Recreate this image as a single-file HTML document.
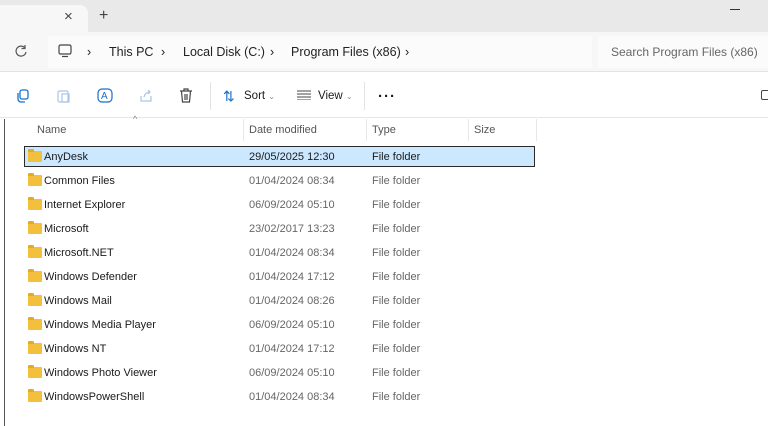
<!DOCTYPE html>
<html><head><style>
*{margin:0;padding:0;box-sizing:border-box}
body{width:768px;height:426px;overflow:hidden;background:#fff;font-family:"Liberation Sans",sans-serif;font-size:11px;color:#1a1a1a;position:relative}
.abs{position:absolute}
.tabbar{left:0;top:0;width:768px;height:32px;background:#e9e9e9}
.tab{left:0;top:5px;width:88px;height:27px;background:#f7f7f7;border-radius:0 8px 0 0}
.addr{left:0;top:32px;width:768px;height:40px;background:#f7f7f7;border-bottom:1px solid #e3e3e3}
.crumb{left:48px;top:36px;width:544px;height:32px;background:#fbfbfb}
.search{left:598px;top:36px;width:170px;height:32px;background:#fbfbfb;color:#666;font-size:12px;padding:9px 0 0 13px}
.bc{top:45px;font-size:12.5px;color:#222}
.tb{top:73px;left:0;width:768px;height:45px;background:#fff;border-bottom:1px solid #e6e6e6}
.hdr{top:119px;color:#555;font-size:11px}
.row{position:absolute;left:0;width:768px;height:24px}
.row span{position:absolute;top:5px}
.f{position:absolute;left:28px;top:5px;width:14px;height:11px;background:#f3c03e;border-radius:1px}
.f:before{content:"";position:absolute;left:0;top:-2px;width:6px;height:3px;background:#e5ab24;border-radius:1px 1px 0 0}
.g{color:#666}
</style></head><body>
<div class="abs tabbar"></div>
<div class="abs tab"></div>
<div class="abs" style="left:64px;top:8px;font-size:15px;color:#444">×</div>
<div class="abs" style="left:99px;top:7px;font-size:16px;color:#444">+</div>
<div class="abs" style="left:730px;top:9px;width:10px;height:1px;background:#333"></div>
<div class="abs addr"></div>
<div class="abs crumb"></div>
<div class="abs search">Search Program Files (x86)</div>
<svg class="abs" style="left:14px;top:44px" width="14" height="14" viewBox="0 0 14 14"><path d="M11 4A5 5 0 1 0 12 8" fill="none" stroke="#555" stroke-width="1.2"/><path d="M11 1v3.5H7.5" fill="none" stroke="#555" stroke-width="1.2"/></svg>
<svg class="abs" style="left:58px;top:44px" width="14" height="14" viewBox="0 0 14 14"><rect x="1" y="1" width="12" height="9" rx="1.5" fill="none" stroke="#444" stroke-width="1.2"/><path d="M4 12.5h6" stroke="#444" stroke-width="1.2"/></svg>
<div class="abs bc" style="left:87px">›</div>
<div class="abs bc" style="left:109px">This PC</div>
<div class="abs bc" style="left:161px">›</div>
<div class="abs bc" style="left:183px">Local Disk (C:)</div>
<div class="abs bc" style="left:270px">›</div>
<div class="abs bc" style="left:291px">Program Files (x86)</div>
<div class="abs bc" style="left:405px">›</div>
<div class="abs tb"></div>
<svg class="abs" style="left:15px;top:88px" width="16" height="16" viewBox="0 0 16 16"><rect x="5" y="2" width="8" height="9" rx="2" fill="none" stroke="#1a6fc9" stroke-width="1.3"/><path d="M3 5v6a3 3 0 0 0 3 3h4" fill="none" stroke="#1a6fc9" stroke-width="1.3"/></svg>
<svg class="abs" style="left:56px;top:88px" width="16" height="16" viewBox="0 0 16 16"><rect x="2" y="3" width="10" height="11" rx="1.5" fill="none" stroke="#a9c6e6" stroke-width="1.2"/><rect x="6" y="6" width="7" height="8" fill="none" stroke="#a9c6e6" stroke-width="1.2"/></svg>
<svg class="abs" style="left:96px;top:87px" width="18" height="17" viewBox="0 0 18 17"><rect x="2" y="2" width="14" height="13" rx="4" fill="none" stroke="#1a6fc9" stroke-width="1.2"/><text x="5" y="12" font-size="10" fill="#1a6fc9" font-family="Liberation Sans">A</text></svg>
<svg class="abs" style="left:138px;top:88px" width="16" height="16" viewBox="0 0 16 16"><path d="M3 8v5h10V8M6 9c1-4 4-5 6-5M10 2l2 2-2 2" fill="none" stroke="#a9c6e6" stroke-width="1.2"/></svg>
<svg class="abs" style="left:178px;top:87px" width="16" height="17" viewBox="0 0 16 17"><path d="M2 4h12M6 4V2h4v2M3.5 4l1 11h7l1-11M7 7v6M9 7v6" fill="none" stroke="#444" stroke-width="1.2"/></svg>
<div class="abs" style="left:210px;top:82px;width:1px;height:28px;background:#e3e3e3"></div>
<div class="abs" style="left:223px;top:88px;font-size:14px;color:#1a6fc9">⇅</div>
<div class="abs" style="left:244px;top:90px;font-size:11.5px">Sort <span style="color:#888;font-size:8px">⌄</span></div>
<svg class="abs" style="left:297px;top:90px" width="14" height="10"><path d="M0 1h14M0 4h14M0 7h14M0 10h14" stroke="#444" stroke-width="1"/></svg>
<div class="abs" style="left:318px;top:90px;font-size:11.5px">View <span style="color:#888;font-size:8px">⌄</span></div>
<div class="abs" style="left:364px;top:82px;width:1px;height:28px;background:#e3e3e3"></div>
<div class="abs" style="left:378px;top:88px;font-size:15px;font-weight:bold;letter-spacing:1px">···</div>
<div class="abs" style="left:761px;top:90px;width:10px;height:10px;border:1px solid #444;border-radius:2px"></div>
<div class="abs" style="left:4px;top:119px;width:1px;height:307px;background:#555"></div>
<div class="abs hdr" style="left:37px;top:124px">Name</div>
<div class="abs" style="left:133px;top:114px;color:#888;font-size:9px">^</div>
<div class="abs" style="left:243px;top:119px;width:1px;height:22px;background:#e8e8e8"></div>
<div class="abs hdr" style="left:249px;top:124px">Date modified</div>
<div class="abs" style="left:366px;top:119px;width:1px;height:22px;background:#e8e8e8"></div>
<div class="abs hdr" style="left:372px;top:124px">Type</div>
<div class="abs" style="left:468px;top:119px;width:1px;height:22px;background:#e8e8e8"></div>
<div class="abs hdr" style="left:474px;top:124px">Size</div>
<div class="abs" style="left:536px;top:119px;width:1px;height:22px;background:#e8e8e8"></div>
<div class="abs" style="left:24px;top:146px;width:511px;height:21px;background:#cce8ff;border:1px solid #2a2a2a"></div>

<div class="row" style="top:146px"><i class="f"></i><span style="left:44px">AnyDesk</span><span style="left:249px">29/05/2025 12:30</span><span style="left:372px">File folder</span></div>
<div class="row" style="top:170px"><i class="f"></i><span style="left:44px">Common Files</span><span class="g" style="left:249px">01/04/2024 08:34</span><span class="g" style="left:372px">File folder</span></div>
<div class="row" style="top:194px"><i class="f"></i><span style="left:44px">Internet Explorer</span><span class="g" style="left:249px">06/09/2024 05:10</span><span class="g" style="left:372px">File folder</span></div>
<div class="row" style="top:218px"><i class="f"></i><span style="left:44px">Microsoft</span><span class="g" style="left:249px">23/02/2017 13:23</span><span class="g" style="left:372px">File folder</span></div>
<div class="row" style="top:242px"><i class="f"></i><span style="left:44px">Microsoft.NET</span><span class="g" style="left:249px">01/04/2024 08:34</span><span class="g" style="left:372px">File folder</span></div>
<div class="row" style="top:266px"><i class="f"></i><span style="left:44px">Windows Defender</span><span class="g" style="left:249px">01/04/2024 17:12</span><span class="g" style="left:372px">File folder</span></div>
<div class="row" style="top:290px"><i class="f"></i><span style="left:44px">Windows Mail</span><span class="g" style="left:249px">01/04/2024 08:26</span><span class="g" style="left:372px">File folder</span></div>
<div class="row" style="top:314px"><i class="f"></i><span style="left:44px">Windows Media Player</span><span class="g" style="left:249px">06/09/2024 05:10</span><span class="g" style="left:372px">File folder</span></div>
<div class="row" style="top:338px"><i class="f"></i><span style="left:44px">Windows NT</span><span class="g" style="left:249px">01/04/2024 17:12</span><span class="g" style="left:372px">File folder</span></div>
<div class="row" style="top:362px"><i class="f"></i><span style="left:44px">Windows Photo Viewer</span><span class="g" style="left:249px">06/09/2024 05:10</span><span class="g" style="left:372px">File folder</span></div>
<div class="row" style="top:386px"><i class="f"></i><span style="left:44px">WindowsPowerShell</span><span class="g" style="left:249px">01/04/2024 08:34</span><span class="g" style="left:372px">File folder</span></div>
</body></html>
